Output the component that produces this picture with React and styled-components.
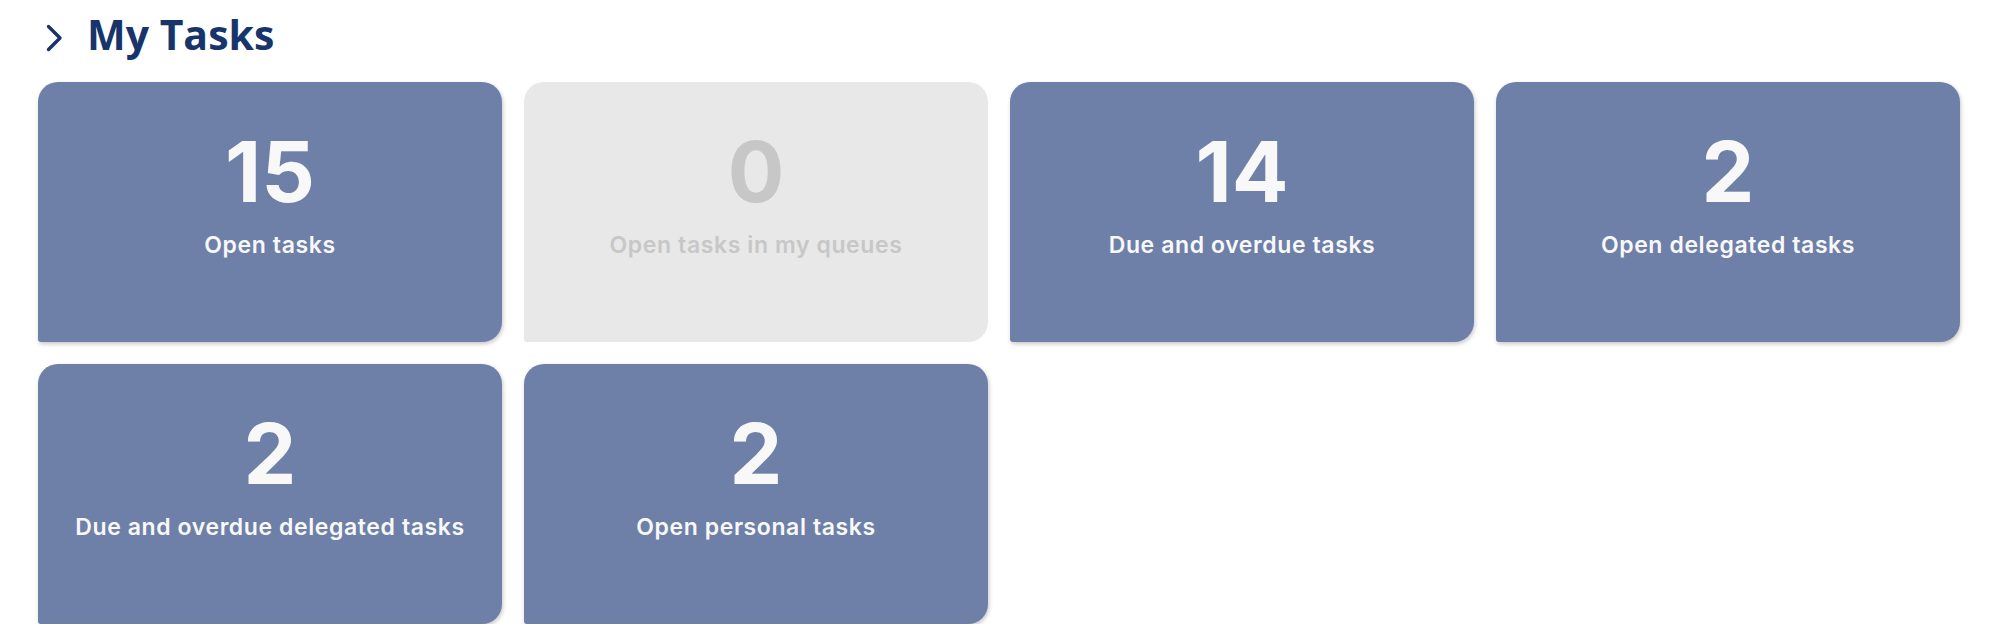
import React from "react";
import styled, { createGlobalStyle } from "styled-components";

const GlobalStyle = createGlobalStyle`
  body {
    margin: 0;
    background: #ffffff;
    font-family: Inter, "Noto Sans", sans-serif;
  }
`;

const Page = styled.div`
  padding: 0 32px 0 38px;
`;

const Header = styled.div`
  display: flex;
  align-items: center;
  height: 70px;
  padding-left: 8px;
  gap: 24px;
  .chevron {
    width: 17px;
    height: 28px;
    flex-shrink: 0;
    margin-top: 6px;
  }
`;

const Title = styled.h1`
  margin: 0 0 2px;
  font-family: "Open Sans", "Noto Sans", sans-serif;
  font-weight: 700;
  font-size: 41px;
  line-height: 1;
  color: #17356b;
  letter-spacing: 0;
`;

const Grid = styled.div`
  display: grid;
  grid-template-columns: repeat(4, 464px);
  grid-auto-rows: 260px;
  gap: 22px;
  margin-top: 12px;
`;

const Card = styled.div`
  display: flex;
  flex-direction: column;
  align-items: center;
  padding-top: 48px;
  box-sizing: border-box;
  border-radius: 20px 20px 20px 3px;
  background: ${(p) => (p.$empty ? "#e8e8e8" : "#6e80a8")};
  color: ${(p) => (p.$empty ? "#c7c7c7" : "#f8f8f8")};
  box-shadow: ${(p) => (p.$empty ? "none" : "1px 2px 4px rgba(0, 0, 0, 0.22)")};
  cursor: pointer;
`;

const Count = styled.div`
  font-size: 84px;
  font-weight: 700;
  line-height: 84px;
  letter-spacing: 0;
`;

const Label = styled.div`
  margin-top: 20px;
  font-size: 23px;
  font-weight: 600;
  line-height: 1;
  letter-spacing: 0.6px;
`;

const tiles = [
  { count: 15, label: "Open tasks" },
  { count: 0, label: "Open tasks in my queues" },
  { count: 14, label: "Due and overdue tasks" },
  { count: 2, label: "Open delegated tasks" },
  { count: 2, label: "Due and overdue delegated tasks" },
  { count: 2, label: "Open personal tasks" },
];

function Chevron() {
  return (
    <svg className="chevron" viewBox="0 0 17 28" fill="none">
      <path
        d="M2.5 2.5 L14 14 L2.5 25.5"
        stroke="#17356b"
        strokeWidth="3.4"
        strokeLinecap="round"
        strokeLinejoin="round"
      />
    </svg>
  );
}

export default function App() {
  return (
    <Page>
      <GlobalStyle />
      <Header>
        <Chevron />
        <Title>My Tasks</Title>
      </Header>
      <Grid>
        {tiles.map((t) => (
          <Card key={t.label} $empty={t.count === 0}>
            <Count>{t.count}</Count>
            <Label>{t.label}</Label>
          </Card>
        ))}
      </Grid>
    </Page>
  );
}
